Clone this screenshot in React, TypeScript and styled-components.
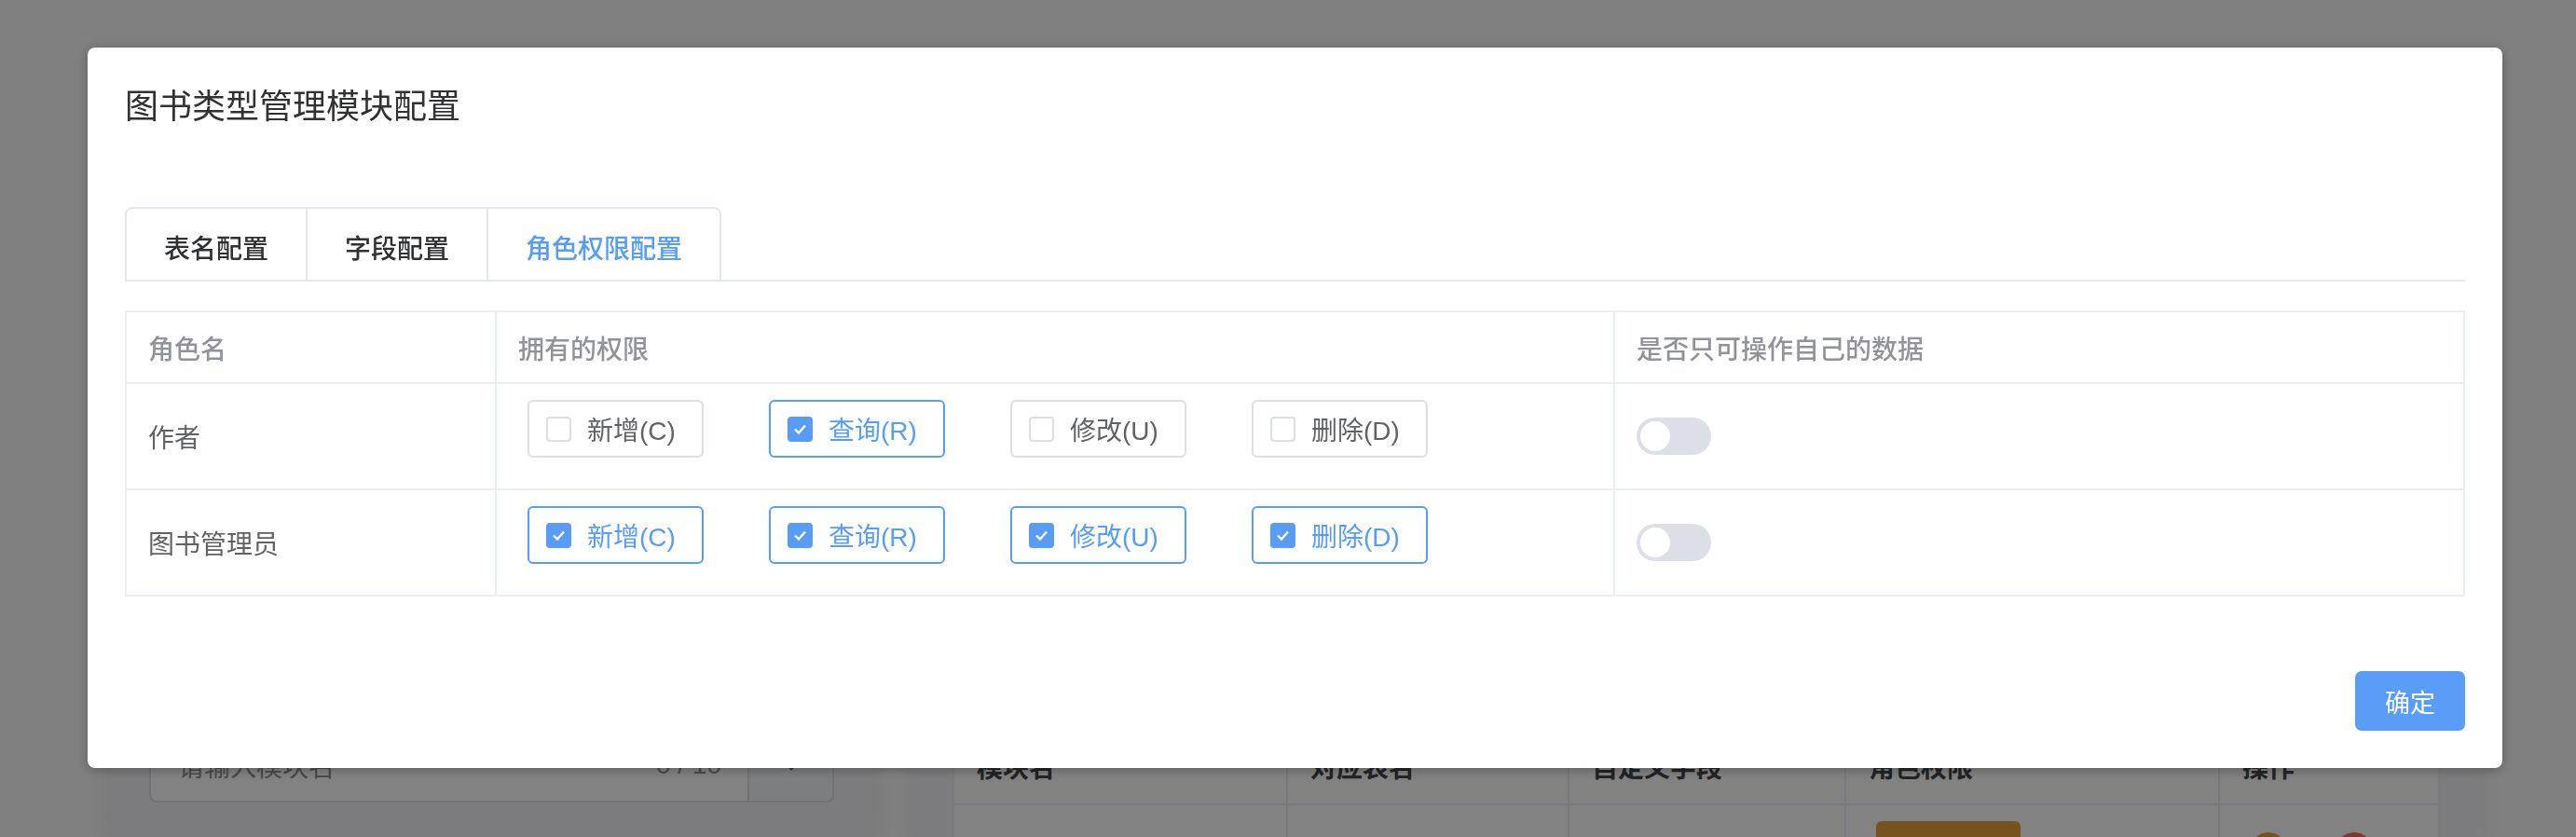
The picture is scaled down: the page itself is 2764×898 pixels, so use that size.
import styled, { createGlobalStyle } from "styled-components";

const BLUE = "#599cf6";

const GlobalStyle = createGlobalStyle`
  html, body {
    margin: 0;
    padding: 0;
  }
  body {
    width: 2764px;
    height: 898px;
    overflow: hidden;
    background: #ffffff;
    font-family: "Liberation Sans", "Noto Sans CJK SC", sans-serif;
  }
  * {
    box-sizing: border-box;
  }
`;

/* ---------- page behind the dialog ---------- */

const Page = styled.div`
  display: flex;
  align-items: flex-start;
  gap: 43px;
  height: 898px;
  padding: 700px 0 0 118px;
  overflow: hidden;
  background: #fbfbfb;
`;

const Card = styled.div<{ $width: number }>`
  width: ${(p) => p.$width}px;
  height: 198px;
  padding: 0 42px;
  overflow: hidden;
  background: #f3f2f6;
  border-radius: 8px 8px 0 0;
  box-shadow: 0 4px 24px rgba(0, 0, 0, 0.08);
`;

const InputGroup = styled.div`
  display: flex;
  height: 80px;
  margin-top: 81px;
  background: #ffffff;
  border: 2px solid #dcdfe6;
  border-radius: 8px;
  overflow: hidden;
`;

const InputField = styled.div`
  flex: 1;
  display: flex;
  align-items: center;
  justify-content: space-between;
  padding: 0 28px 0 29px;
  font-size: 28px;
  color: #8e9096;
`;

const InputAppend = styled.div`
  display: flex;
  align-items: center;
  justify-content: center;
  width: 91px;
  background: #f5f7fa;
  border-left: 2px solid #dcdfe6;
  color: #606266;
`;

const BgTable = styled.div`
  margin-top: 80px;
  background: #ffffff;
  border: 2px solid #ebeef5;
`;

const BgRow = styled.div<{ $height: number }>`
  display: flex;
  height: ${(p) => p.$height}px;
  border-bottom: 2px solid #ebeef5;
`;

const BgCell = styled.div<{ $width: number; $head?: boolean }>`
  display: flex;
  align-items: ${(p) => (p.$head ? "center" : "flex-start")};
  gap: 52px;
  width: ${(p) => p.$width}px;
  padding: ${(p) => (p.$head ? "0 0 0 24px" : "17px 0 0 32px")};
  font-size: 28px;
  font-weight: 600;
  color: #44464a;
  border-right: 2px solid #ebeef5;

  &:last-child {
    border-right: none;
    flex: 1;
  }
`;

const BgTag = styled.span`
  display: inline-flex;
  align-items: center;
  height: 60px;
  padding: 0 22px;
  font-size: 26px;
  font-weight: 400;
  color: #ffffff;
  background: #e6a23c;
  border-radius: 6px;
`;

const BgDot = styled.span<{ $color: string }>`
  width: 40px;
  height: 40px;
  margin-top: 12px;
  border-radius: 50%;
  background: ${(p) => p.$color};
`;

/* ---------- dialog ---------- */

const Overlay = styled.div`
  position: fixed;
  inset: 0;
  background: rgba(0, 0, 0, 0.49);
`;

const Dialog = styled.div`
  width: 2591px;
  margin: 51px 0 0 94px;
  background: #ffffff;
  border-radius: 8px;
  box-shadow: 0 2px 12px rgba(0, 0, 0, 0.3);
`;

const DialogHeader = styled.div`
  padding: 40px 40px 20px;
`;

const DialogTitle = styled.span`
  font-size: 36px;
  line-height: 48px;
  color: #303133;
`;

const DialogBody = styled.div`
  padding: 63px 40px 60px;
`;

const TabsHeader = styled.div`
  display: flex;
  margin-bottom: 31px;
  border-bottom: 2px solid #e4e7ed;
`;

const TabNav = styled.div`
  display: flex;
  border: 2px solid #e4e7ed;
  border-bottom: none;
  border-radius: 8px 8px 0 0;
`;

const TabItem = styled.div<{ $active?: boolean }>`
  display: flex;
  align-items: center;
  height: 76px;
  padding: 5px 40px 0;
  font-size: 28px;
  font-weight: 500;
  color: ${(p) => (p.$active ? BLUE : "#303133")};

  & + & {
    border-left: 2px solid #e4e7ed;
  }
`;

const Table = styled.div`
  display: grid;
  grid-template-columns: 397px 1200px 1fr;
  border: 2px solid #ebeef5;
`;

const HeadCell = styled.div`
  display: flex;
  align-items: center;
  height: 77px;
  padding-left: 23px;
  font-size: 28px;
  font-weight: 500;
  color: #909399;
  border-bottom: 2px solid #ebeef5;

  &:not(:nth-child(3n)) {
    border-right: 2px solid #ebeef5;
  }
`;

const BodyCell = styled.div<{ $last?: boolean; $shift?: boolean }>`
  display: flex;
  align-items: center;
  height: ${(p) => (p.$last ? 112 : 114)}px;
  padding: ${(p) => (p.$shift ? "0 0 16px 33px" : "0 0 0 23px")};
  font-size: 28px;
  color: #606266;
  border-bottom: ${(p) => (p.$last ? "none" : "2px solid #ebeef5")};

  &:not(:nth-child(3n)) {
    border-right: 2px solid #ebeef5;
  }
`;

const CheckGroup = styled.div`
  display: flex;
  gap: 70px;
`;

const CheckButton = styled.label<{ $checked: boolean }>`
  display: flex;
  align-items: center;
  gap: 17px;
  width: 189px;
  height: 62px;
  padding-left: 18px;
  border: 2px solid ${(p) => (p.$checked ? BLUE : "#dcdfe6")};
  border-radius: 6px;
  font-size: 28px;
  color: ${(p) => (p.$checked ? BLUE : "#606266")};
  white-space: nowrap;
`;

const CheckBox = styled.span<{ $checked: boolean }>`
  display: flex;
  align-items: center;
  justify-content: center;
  width: 27px;
  height: 27px;
  flex-shrink: 0;
  border: 2px solid ${(p) => (p.$checked ? BLUE : "#dcdfe6")};
  border-radius: 4px;
  background: ${(p) => (p.$checked ? BLUE : "#ffffff")};
`;

const Switch = styled.span`
  position: relative;
  width: 80px;
  height: 40px;
  border-radius: 20px;
  background: #dcdfe6;

  &::after {
    content: "";
    position: absolute;
    top: 4px;
    left: 4px;
    width: 32px;
    height: 32px;
    border-radius: 50%;
    background: #ffffff;
  }
`;

const DialogFooter = styled.div`
  display: flex;
  justify-content: flex-end;
  padding: 20px 40px 40px;
`;

const PrimaryButton = styled.button`
  height: 64px;
  padding: 0 32px;
  font-family: inherit;
  font-size: 27px;
  color: #ffffff;
  background: #599df8;
  border: none;
  border-radius: 7px;
`;

const PERMISSIONS = ["新增(C)", "查询(R)", "修改(U)", "删除(D)"];

const ROLES = [
  { name: "作者", granted: [false, true, false, false] },
  { name: "图书管理员", granted: [true, true, true, true] },
];

const BG_COLUMNS = [
  { title: "模块名", width: 358 },
  { title: "对应表名", width: 302 },
  { title: "自定义字段", width: 297 },
  { title: "角色权限", width: 401 },
  { title: "操作", width: 239 },
];

function CheckMark() {
  return (
    <svg width="19" height="19" viewBox="0 0 19 19">
      <polyline
        points="4,9.5 8,13.5 15,5.5"
        fill="none"
        stroke="#ffffff"
        strokeWidth="2.4"
      />
    </svg>
  );
}

function Background() {
  return (
    <Page>
      <Card $width={819}>
        <InputGroup>
          <InputField>
            <span>请输入模块名</span>
            <span>0 / 10</span>
          </InputField>
          <InputAppend>
            <svg width="22" height="22" viewBox="0 0 22 22">
              <polyline points="4,8 11,15 18,8" fill="none" stroke="#606266" strokeWidth="2.5" />
            </svg>
          </InputAppend>
        </InputGroup>
      </Card>
      <Card $width={1680}>
        <BgTable>
          <BgRow $height={82}>
            {BG_COLUMNS.map((col) => (
              <BgCell key={col.title} $width={col.width} $head>
                {col.title}
              </BgCell>
            ))}
          </BgRow>
          <BgRow $height={120}>
            {BG_COLUMNS.map((col, i) => (
              <BgCell key={col.title} $width={col.width}>
                {i === 3 && <BgTag>作者 全部</BgTag>}
                {i === 4 && (
                  <>
                    <BgDot $color="#e6a23c" />
                    <BgDot $color="#f56c6c" />
                  </>
                )}
              </BgCell>
            ))}
          </BgRow>
        </BgTable>
      </Card>
    </Page>
  );
}

export default function App() {
  return (
    <>
      <GlobalStyle />
      <Background />
      <Overlay>
        <Dialog>
          <DialogHeader>
            <DialogTitle>图书类型管理模块配置</DialogTitle>
          </DialogHeader>
          <DialogBody>
            <TabsHeader>
              <TabNav>
                <TabItem>表名配置</TabItem>
                <TabItem>字段配置</TabItem>
                <TabItem $active>角色权限配置</TabItem>
              </TabNav>
            </TabsHeader>
            <Table>
              <HeadCell>角色名</HeadCell>
              <HeadCell>拥有的权限</HeadCell>
              <HeadCell>是否只可操作自己的数据</HeadCell>
              {ROLES.map((role, r) => {
                const last = r === ROLES.length - 1;
                return [
                  <BodyCell key={`${role.name}-name`} $last={last}>
                    {role.name}
                  </BodyCell>,
                  <BodyCell key={`${role.name}-perm`} $last={last} $shift>
                    <CheckGroup>
                      {PERMISSIONS.map((perm, i) => (
                        <CheckButton key={perm} $checked={role.granted[i]}>
                          <CheckBox $checked={role.granted[i]}>
                            {role.granted[i] && <CheckMark />}
                          </CheckBox>
                          {perm}
                        </CheckButton>
                      ))}
                    </CheckGroup>
                  </BodyCell>,
                  <BodyCell key={`${role.name}-own`} $last={last}>
                    <Switch />
                  </BodyCell>,
                ];
              })}
            </Table>
          </DialogBody>
          <DialogFooter>
            <PrimaryButton>确定</PrimaryButton>
          </DialogFooter>
        </Dialog>
      </Overlay>
    </>
  );
}
